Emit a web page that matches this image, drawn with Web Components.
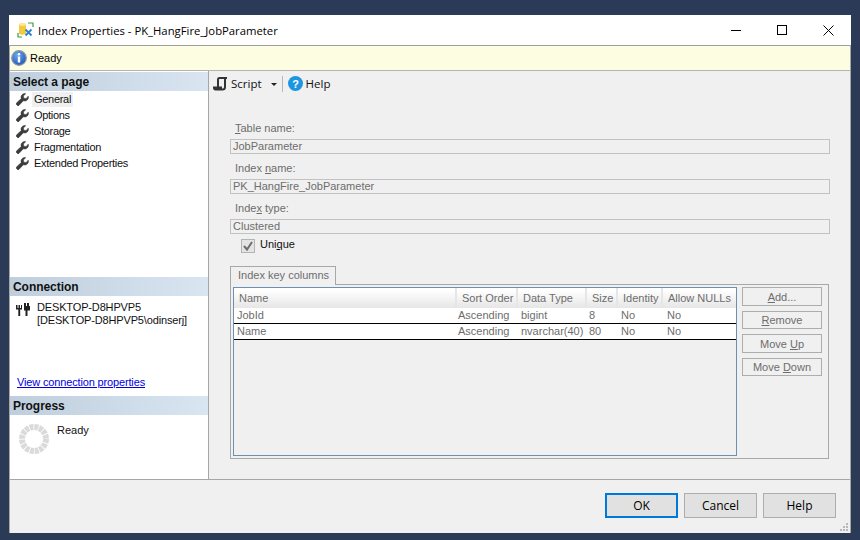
<!DOCTYPE html>
<html>
<head>
<meta charset="utf-8">
<title>Index Properties</title>
<style>
  html, body { margin: 0; height: 100%; overflow: hidden; }
  body {
    box-sizing: border-box;
    width: 860px;
    height: 540px;
    padding: 15px 9px 7px;
    background: #2b3a57;
    font: 11px "Liberation Sans", Arial, sans-serif;
    color: #000;
  }
</style>
</head>
<body>
<dialog-window>
  <title-bar slot="title">Index Properties - PK_HangFire_JobParameter</title-bar>
  <info-bar slot="info">Ready</info-bar>
  <side-panel slot="side">
    <section-head>Select a page</section-head>
    <page-list>
      <page-item active>General</page-item>
      <page-item>Options</page-item>
      <page-item>Storage</page-item>
      <page-item>Fragmentation</page-item>
      <page-item>Extended Properties</page-item>
    </page-list>
    <section-head>Connection</section-head>
    <connection-box></connection-box>
    <section-head>Progress</section-head>
    <progress-box>Ready</progress-box>
  </side-panel>
  <general-page slot="main">
    <tool-bar></tool-bar>
    <form-area>
      <form-field value="JobParameter"><u>T</u>able name:</form-field>
      <form-field value="PK_HangFire_JobParameter">Index <u>n</u>ame:</form-field>
      <form-field value="Clustered">Inde<u>x</u> type:</form-field>
      <check-box>Uni<u>q</u>ue</check-box>
      <tab-box label="Index key columns">
        <key-grid>
          <key-row header><span>Name</span><span>Sort Order</span><span>Data Type</span><span>Size</span><span>Identity</span><span>Allow NULLs</span></key-row>
          <key-row><span>JobId</span><span>Ascending</span><span>bigint</span><span>8</span><span>No</span><span>No</span></key-row>
          <key-row><span>Name</span><span>Ascending</span><span>nvarchar(40)</span><span>80</span><span>No</span><span>No</span></key-row>
        </key-grid>
        <side-buttons slot="actions">
          <small-button><u>A</u>dd...</small-button>
          <small-button><u>R</u>emove</small-button>
          <small-button>Move <u>U</u>p</small-button>
          <small-button>Move <u>D</u>own</small-button>
        </side-buttons>
      </tab-box>
    </form-area>
  </general-page>
  <dialog-footer slot="footer">
    <dialog-button default>OK</dialog-button>
    <dialog-button>Cancel</dialog-button>
    <dialog-button>Help</dialog-button>
  </dialog-footer>
</dialog-window>

<script>
  // small helper, every element is just a style + markup
  function define(name, html) {
    customElements.define(name, class extends HTMLElement {
      constructor() {
        super();
        this.attachShadow({ mode: 'open' });
      }
      connectedCallback() {
        this.shadowRoot.innerHTML = typeof html === 'function' ? html(this) : html;
      }
    });
  }

  const wrench = `<svg width="13" height="13" viewBox="0 0 13 13"><path fill="#3c3c3c" stroke="#3c3c3c" stroke-width=".6" d="M8.600.6a3.600 3.600 0 0 0-3.300 5L.7 9.800a1.400 1.400 0 0 0 0 2l.4.400a1.400 1.400 0 0 0 2 0l4.300-4.500a3.600 3.600 0 0 0 4.800-4.500L10 5.700 7.800 5.200 7.300 3l2.400-2.300A3.600 3.600 0 0 0 8.600.6z"/></svg>`;

  define('dialog-window', `
    <style>
      :host { display: flex; flex-direction: column; width: 842px; height: 518px; background: #fff; }
      .body { flex: 1; display: flex; flex-direction: column; min-height: 0; border: solid #a6a6a6; border-width: 0 1px; background: #f0f0f0; }
      .mid { flex: 1; display: flex; min-height: 0; border-top: 1px solid #b4b4b4; }
    </style>
    <slot name="title"></slot>
    <div class="body">
      <slot name="info"></slot>
      <div class="mid"><slot name="side"></slot><slot name="main"></slot></div>
      <slot name="footer"></slot>
    </div>`);

  define('title-bar', `
    <style>
      :host { display: flex; align-items: center; height: 30px; border-bottom: 1px solid #a0a0a0; background: #fff; font: 11.3px "Open Sans", sans-serif; color: #000; }
      .ico { margin: 0 3px 0 8px; display: flex; }
      .txt { flex: 1; white-space: nowrap; }
      .ctl { width: 46px; display: flex; justify-content: center; }
    </style>
    <span class="ico"><svg width="18" height="18" viewBox="0 0 18 18">
      <path fill="#f5c93c" d="M2 3.500c0-1.500 7-1.500 7 0v9c0 1.500-7 1.500-7 0z"/>
      <ellipse cx="5.500" cy="3.500" rx="3.500" ry="1.400" fill="#fbe79a"/>
      <path fill="none" stroke="#3f9a4a" stroke-width="1.200" d="M11 2h5v4M1 12v4h4"/>
      <path fill="none" stroke="#2f7fd0" stroke-width="1.800" d="M8.500 8.500l6 6M14.500 8.500l-6 6"/>
    </svg></span>
    <span class="txt"><slot></slot></span>
    <span class="ctl"><svg width="10" height="10"><path d="M0 5.500h10" stroke="#000"/></svg></span>
    <span class="ctl"><svg width="10" height="10"><rect x=".5" y=".5" width="9" height="9" fill="none" stroke="#000"/></svg></span>
    <span class="ctl"><svg width="11" height="11"><path d="M.5.5l10 10M10.500.5l-10 10" stroke="#000" fill="none"/></svg></span>`);

  define('info-bar', `
    <style>
      :host { display: flex; align-items: center; height: 24px; background: #fdfde2; }
      .ico { display: flex; margin: 0 3px 0 1px; }
    </style>
    <span class="ico"><svg width="16" height="16" viewBox="0 0 16 16">
      <defs><radialGradient id="g" cx=".4" cy=".3" r=".8"><stop offset="0" stop-color="#6aa8f0"/><stop offset="1" stop-color="#1c4fb0"/></radialGradient></defs>
      <circle cx="8" cy="8" r="7.300" fill="url(#g)" stroke="#8e98a8" stroke-width="1.200"/>
      <circle cx="8" cy="4.300" r="1.300" fill="#fff"/>
      <rect x="6.800" y="6.500" width="2.400" height="6" fill="#fff"/>
    </svg></span>
    <slot></slot>`);

  define('side-panel', `
    <style>
      :host { display: flex; flex-direction: column; width: 198px; flex: none; padding-top: 1px; box-sizing: content-box; background: #fff; border-right: 1px solid #a6a6a6; }
    </style>
    <slot></slot>`);

  define('section-head', `
    <style>
      :host { display: flex; align-items: center; height: 19px; flex: none; padding-left: 3px; font-size: 12px; font-weight: bold; letter-spacing: -.05px; color: #111;
        background: linear-gradient(90deg, #bfcedd, #d9e5f1); }
    </style>
    <slot></slot>`);

  define('page-list', `
    <style>:host { display: block; flex: 1; }</style>
    <slot></slot>`);

  define('page-item', el => `
    <style>
      :host { display: flex; align-items: center; height: 16px; padding-left: 6px; color: #111; letter-spacing: -.3px; }
      .ico { display: flex; margin-right: 3px; }
      .txt { padding: 0 2px; line-height: 15px; ${el.hasAttribute('active') ? 'background: #f0f0f0;' : ''} }
    </style>
    <span class="ico">${wrench}</span><span class="txt"><slot></slot></span>`);

  define('connection-box', `
    <style>
      :host { display: block; height: 100px; flex: none; color: #111; }
      .top { display: flex; padding: 5px 0 0 6px; line-height: 13px; letter-spacing: -.15px; }
      .ico { display: flex; margin: 2px 6px 0 0; }
      a { display: block; margin: 48px 0 0 7px; color: #0000e0; text-decoration: underline; line-height: 14px; letter-spacing: -.15px; }
    </style>
    <div class="top">
      <span class="ico"><svg width="15" height="13" viewBox="0 0 15 13"><path fill="#222" d="M0 2h1.500v3h1V2H4v3h1v-3h1v4.500H4.200V13H2.300V6.500H0zM8 0h2v3h1V0h2v3h1v4.500h-2.500V13H9.500V7.500H8z"/></svg></span>
      <div>DESKTOP-D8HPVP5<br>[DESKTOP-D8HPVP5\\odinserj]</div>
    </div>
    <a>View connection properties</a>`);

  define('progress-box', `
    <style>
      :host { display: flex; height: 64px; flex: none; padding: 8px 0 0 9px; box-sizing: border-box; color: #111; }
      svg { margin: 1px 8px 0 0; }
      .t { line-height: 14px; }
    </style>
    <svg width="30" height="30" viewBox="0 0 30 30"><circle cx="15" cy="15" r="12" fill="none" stroke="#dadada" stroke-width="6" stroke-dasharray="3.900 0.812"/></svg>
    <span class="t"><slot></slot></span>`);

  define('general-page', `
    <style>:host { display: flex; flex-direction: column; flex: 1; min-width: 0; background: #f0f0f0; }</style>
    <slot></slot>`);

  define('tool-bar', `
    <style>
      :host { display: flex; align-items: center; height: 25px; flex: none; padding-left: 4px; color: #111; font: 11.5px "Open Sans", sans-serif; }
      .ico { display: flex; margin-right: 3px; }
      .arrow { width: 0; height: 0; margin: 1px 5px 0 9px; border: solid transparent; border-width: 3px 3px 0; border-top-color: #222; }
      .sep { width: 1px; height: 16px; background: #b8b8b8; margin-right: 5px; }
    </style>
    <span class="ico"><svg width="15" height="15" viewBox="0 0 15 15"><path fill="none" stroke="#333" stroke-width="2" d="M5 12V3.500C5 2.500 5.500 2 6.500 2H14M12 2v9c0 1.500-1 2.500-2.500 2.500H2.500C1.500 13.500 1 12.500 1 11.500h7v2"/></svg></span>
    <span>Script</span><span class="arrow"></span><span class="sep"></span>
    <span class="ico"><svg width="15" height="15" viewBox="0 0 15 15"><circle cx="7.500" cy="7.500" r="7.500" fill="#1c96e0"/><text x="7.500" y="11.500" text-anchor="middle" font-family="Liberation Sans" font-weight="bold" font-size="11" fill="#fff">?</text></svg></span>
    <span>Help</span>`);

  define('form-area', `
    <style>:host { display: flex; flex-direction: column; flex: 1; padding: 25px 20px 0 21px; min-height: 0; color: #6d6d6d; }</style>
    <slot></slot>`);

  define('form-field', el => `
    <style>
      :host { display: block; height: 40px; flex: none; }
      .l { height: 18px; padding-left: 5px; line-height: 14px; }
      .v { box-sizing: border-box; height: 15px; border: 1px solid #c2c2c2; padding-left: 2px; line-height: 13px; background: #f0f0f0; }
    </style>
    <div class="l"><slot></slot></div>
    <div class="v">${el.getAttribute('value')}</div>`);

  define('check-box', `
    <style>
      :host { display: flex; height: 29px; flex: none; margin-top: -4px; padding-left: 11px; color: #111; }
      .b { box-sizing: border-box; width: 14px; height: 14px; margin: 2px 5px 0 0; border: 1px solid #b4b4b4; background: #e4e4e4; display: flex; }
      .t { line-height: 14px; }
    </style>
    <span class="b"><svg width="12" height="12" viewBox="0 0 12 12"><path d="M2 6l3 3.500L10 2" fill="none" stroke="#6e6e6e" stroke-width="2"/></svg></span>
    <span class="t"><slot></slot></span>`);

  define('tab-box', el => `
    <style>
      :host { display: flex; flex-direction: column; width: 599px; flex: none; }
      .tab { box-sizing: border-box; align-self: flex-start; width: 106px; height: 19px; margin-bottom: -1px; position: relative; border: 1px solid #a8a8a8; border-bottom: 0; background: #f0f0f0; padding-left: 7px; line-height: 17px; white-space: nowrap; }
      .panel { box-sizing: border-box; height: 175px; border: 1px solid #a8a8a8; padding: 2px 7px 2px 2px; display: flex; gap: 5px; }
    </style>
    <div class="tab">${el.getAttribute('label')}</div>
    <div class="panel"><slot></slot><slot name="actions"></slot></div>`);

  define('key-grid', `
    <style>:host { display: block; box-sizing: border-box; width: 504px; border: 1px solid #6f8fb0; }</style>
    <slot></slot>`);

  const cols = '223px 61px 69px 31px 45px 73px';

  define('key-row', el => el.hasAttribute('header') ? `
    <style>
      :host { display: grid; grid-template-columns: ${cols}; height: 20px; align-items: center; background: linear-gradient(#fff 10%, #e6e6e6); }
      ::slotted(span) { box-sizing: border-box; height: 20px; line-height: 20px; padding-left: 5px; white-space: nowrap; border-right: 2px solid #e6e6e6; }
      ::slotted(span:last-child) { border-right: 0; padding-left: 5px; }
    </style>
    <slot></slot>` : `
    <style>
      :host { display: grid; grid-template-columns: ${cols}; height: 15px; align-items: center; background: #fff; border-bottom: 1px solid #000; }
      ::slotted(span) { line-height: 15px; white-space: nowrap; padding-left: 3px; }
      ::slotted(span:nth-child(2)) { padding-left: 1px; }
      ::slotted(span:nth-child(4)) { padding-left: 2px; }
      ::slotted(span:nth-child(6)) { padding-left: 4px; }
    </style>
    <slot></slot>`);

  define('side-buttons', `
    <style>:host { display: flex; flex-direction: column; gap: 5px; width: 80px; flex: none; }</style>
    <slot></slot>`);

  define('small-button', `
    <style>
      :host { display: flex; align-items: center; justify-content: center; box-sizing: border-box; height: 19px; border: 1px solid #adadad; background: #f0f0f0; color: #6d6d6d; }
      :host(:nth-child(even)) { height: 18px; }
    </style>
    <span><slot></slot></span>`);

  define('dialog-footer', `
    <style>
      :host { display: flex; justify-content: flex-end; gap: 6px; height: 54px; flex: none; box-sizing: border-box; padding: 13px 14px 0 0; border-top: 1px solid #a6a6a6; position: relative; background: #f0f0f0; }
      .grip { position: absolute; right: 1px; bottom: 1px; }
    </style>
    <slot></slot>
    <svg class="grip" width="9" height="9"><path fill="#b8b8b8" d="M6 0h2v2H6zM3 3h2v2H3zM6 3h2v2H6zM0 6h2v2H0zM3 6h2v2H3zM6 6h2v2H6z"/></svg>`);

  define('dialog-button', el => `
    <style>
      :host { display: flex; align-items: center; justify-content: center; box-sizing: border-box; width: 73px; height: 25px; background: #e1e1e1; font: 12px "Open Sans", sans-serif; color: #000;
        border: ${el.hasAttribute('default') ? '2px solid #0078d7' : '1px solid #adadad'}; }
    </style>
    <slot></slot>`);
</script>
</body>
</html>
